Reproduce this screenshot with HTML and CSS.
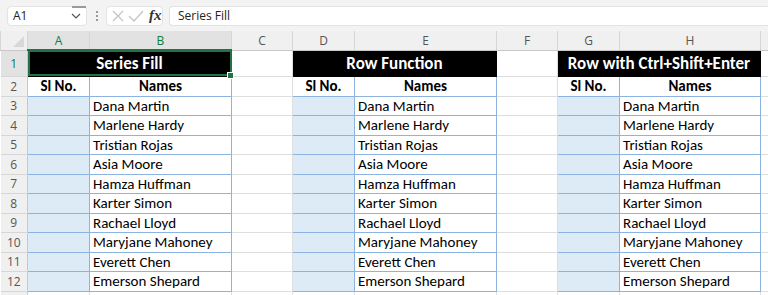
FILE: index.html
```html
<!DOCTYPE html>
<html lang="en">
<head>
  <meta charset="UTF-8">
  <title>Series Fill</title>
  <link rel="stylesheet" href="styles.css">
</head>
<body>
  <div class="formula-bar">
    <div class="name-box">
      <span>A1</span>
      <svg class="chev" width="10" height="6" viewBox="0 0 10 6"><path d="M1 1 L5 5 L9 1" fill="none" stroke="#555" stroke-width="1.2"/></svg>
    </div>
    <div class="dots"><i></i><i></i><i></i></div>
    <div class="fx-box">
      <svg width="14" height="14" viewBox="0 0 14 14"><path d="M2 2 L12 12 M12 2 L2 12" stroke="#c4c4c4" stroke-width="1.3"/></svg>
      <svg width="16" height="14" viewBox="0 0 16 14"><path d="M1 7 L6 12 L15 2" fill="none" stroke="#c4c4c4" stroke-width="1.3"/></svg>
      <span class="fx">fx</span>
    </div>
    <div class="formula-input">Series Fill</div>
  </div>

  <table class="sheet">
    <colgroup>
      <col class="c-rh"><col class="c-sl"><col class="c-name"><col class="c-gap">
      <col class="c-sl"><col class="c-name"><col class="c-gap"><col class="c-sl"><col class="c-name2"><col>
    </colgroup>
    <tr class="col-head">
      <th class="corner"><span class="tri"></span></th>
      <th class="sel">A</th><th class="sel">B</th><th>C</th><th>D</th><th>E</th><th>F</th><th>G</th><th>H</th><th></th>
    </tr>
    <tr class="r-title">
      <th class="rh sel">1</th>
      <td colspan="2" class="title active">Series Fill</td>
      <td></td>
      <td colspan="2" class="title">Row Function</td>
      <td></td>
      <td colspan="2" class="title">Row with Ctrl+Shift+Enter</td>
      <td></td>
    </tr>
    <tr class="r-head">
      <th class="rh">2</th>
      <td class="t hd">Sl No.</td><td class="t hd">Names</td><td></td>
      <td class="t hd">Sl No.</td><td class="t hd">Names</td><td></td>
      <td class="t hd">Sl No.</td><td class="t hd">Names</td><td></td>
    </tr>
  </table>
  <script>
    const names = ['Dana Martin', 'Marlene Hardy', 'Tristian Rojas', 'Asia Moore', 'Hamza Huffman',
      'Karter Simon', 'Rachael Lloyd', 'Maryjane Mahoney', 'Everett Chen', 'Emerson Shepard'];
    const table = document.querySelector('.sheet');
    names.forEach((name, i) => {
      const tr = document.createElement('tr');
      tr.className = 'r-data';
      let html = `<th class="rh">${i + 3}</th>`;
      for (let k = 0; k < 3; k++) {
        html += `<td class="t sl"></td><td class="t nm">${name}</td><td></td>`;
      }
      tr.innerHTML = html;
      table.appendChild(tr);
    });
    // row 13 peeks in under the frame edge, its number is hidden
    const last = document.createElement('tr');
    last.className = 'r-data';
    last.innerHTML = '<th class="rh"></th>' + '<td></td>'.repeat(9);
    table.appendChild(last);
  </script>
</body>
</html>
```

FILE: styles.css
```css
html, body {
  margin: 0;
  padding: 0;
  width: 768px;
  height: 295px;
  overflow: hidden;
  background: #fff;
  font-family: "Carlito", "Lato", sans-serif;
}

.formula-bar {
  display: flex;
  align-items: center;
  height: 31px;
  background: #f3f3f3;
  padding-left: 7px;
  box-sizing: border-box;
  font-family: "Open Sans", "Noto Sans", sans-serif;
  font-size: 12px;
  color: #222;
}

.name-box {
  width: 80px;
  height: 20px;
  box-sizing: border-box;
  background: #fff;
  border: 1px solid #e3e3e3;
  border-radius: 4px;
  display: flex;
  align-items: center;
  justify-content: space-between;
  padding: 0 5px 0 5px;
  position: relative;
}

.name-box::before {
  content: "";
  position: absolute;
  right: 0;
  top: -1px;
  width: 14px;
  height: 2px;
  background: #9a9a9a;
}

.dots {
  width: 19px;
  display: flex;
  flex-direction: column;
  align-items: center;
  gap: 2px;
}

.dots i {
  width: 2px;
  height: 2px;
  background: #999;
}

.fx-box {
  width: 57px;
  height: 20px;
  box-sizing: border-box;
  background: #fff;
  border: 1px solid #e3e3e3;
  border-radius: 4px;
  display: flex;
  align-items: center;
  gap: 3px;
  padding-left: 4px;
}

.fx {
  font-family: "Liberation Serif", serif;
  font-style: italic;
  font-weight: bold;
  font-size: 15px;
  color: #333;
  margin-left: 2px;
}

.formula-input {
  flex: 1;
  height: 20px;
  margin-left: 6px;
  box-sizing: border-box;
  background: #fff;
  border: 1px solid #e3e3e3;
  border-right: none;
  border-radius: 4px 0 0 4px;
  padding-left: 8px;
  line-height: 18px;
}

.sheet {
  table-layout: fixed;
  border-collapse: collapse;
  width: 790px;
  font-size: 15px;
  color: #000;
}

.c-rh { width: 27px; }
.c-sl { width: 62px; }
.c-name { width: 142px; }
.c-name2 { width: 141px; }
.c-gap { width: 61px; }

.sheet td {
  border: 1px solid #dedede;
  padding: 0 3px;
  white-space: nowrap;
  overflow: hidden;
}

.col-head th {
  height: 18px;
  background: #f0f0f0;
  border: 1px solid #d6d6d6;
  border-top: none;
  border-bottom-color: #c8c8c8;
  font-family: "Open Sans", "Noto Sans", sans-serif;
  font-weight: normal;
  font-size: 12px;
  color: #555;
  padding: 0;
}

.col-head th.sel {
  background: #e2e2e2;
  color: #107c41;
  border-bottom: 2px solid #107c41;
}

.corner {
  position: relative;
}

.tri {
  position: absolute;
  right: 3px;
  bottom: 3px;
  width: 0;
  height: 0;
  border-left: 11px solid transparent;
  border-bottom: 11px solid #d8d8d8;
}

.rh {
  background: #f0f0f0;
  border: 1px solid #d6d6d6;
  border-left: none;
  border-right-color: #c8c8c8;
  font-family: "Open Sans", "Noto Sans", sans-serif;
  font-weight: normal;
  font-size: 12px;
  color: #555;
  padding: 0;
  text-align: center;
}

.rh.sel {
  background: #e2e2e2;
  color: #107c41;
}

.r-title { height: 26px; }
.r-head { height: 20px; }
.r-data { height: 19.5px; }

.sheet td.title {
  background: #000;
  color: #fff;
  font-weight: bold;
  font-size: 17px;
  text-align: center;
  border-color: #000;
  padding: 0;
}

.sheet td.title.active {
  position: relative;
  overflow: visible;
  outline: 2px solid #217346;
  outline-offset: -2px;
}

.sheet td.title.active::after {
  content: "";
  position: absolute;
  right: -3px;
  bottom: -3px;
  width: 5px;
  height: 5px;
  background: #217346;
  border: 1px solid #fff;
  z-index: 2;
}

.sheet td.t {
  border-color: #8db3e2;
}

.sheet td.hd {
  font-weight: bold;
  text-align: center;
}

.sheet td.sl {
  background: #ddebf7;
}
```
